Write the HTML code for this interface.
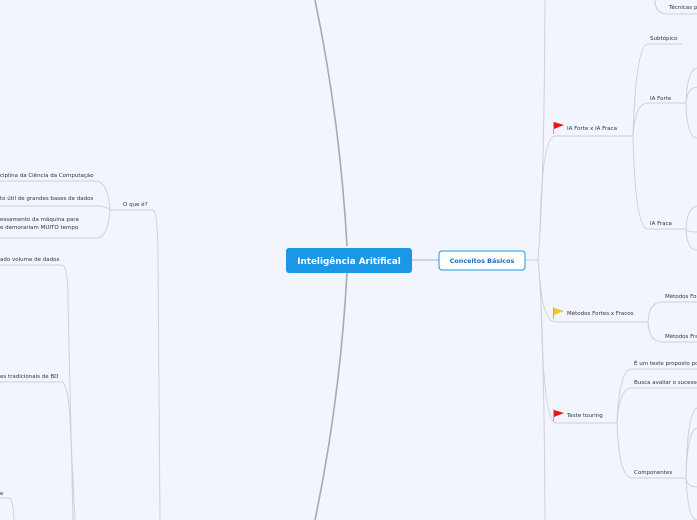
<!DOCTYPE html>
<html><head><meta charset="utf-8"><style>
html,body{margin:0;padding:0;background:#f2f5fd;width:697px;height:520px;overflow:hidden}
svg{display:block}
text{font-family:"DejaVu Sans","Liberation Sans",sans-serif;font-size:5.5px;fill:#333}
</style></head><body>
<svg width="697" height="520" viewBox="0 0 697 520" xmlns="http://www.w3.org/2000/svg">
<g fill="none" stroke="#a9a9a9" stroke-width="1.6">
<path d="M315,0 Q340,120 347,246"/>
<path d="M347,273 Q340,400 315,520"/>
</g>
<g fill="none" stroke="#cfd0d4" stroke-width="1">
<path d="M411,260 L439,260" stroke="#b5b5b5"/>
<path d="M525,260 L538,260"/>
<path d="M545,0 Q544,200 538,258 Q544,320 545,520"/>
<path d="M655,0 Q655,14 668,14 L697,14"/>
<path d="M540,230 Q542,136 555,136 L633,136"/>
<path d="M633,136 Q636,44 648,44 L682,44"/>
<path d="M633,136 Q635,103 648,103 L686,103"/>
<path d="M633,136 Q635,229 648,229 L686,229"/>
<path d="M686,103 Q687,70 697,68"/>
<path d="M686,103 Q687,88 697,87"/>
<path d="M686,103 Q687,138 697,138"/>
<path d="M686,229 Q687,208 697,206"/>
<path d="M686,229 Q687,232 697,232"/>
<path d="M686,229 Q687,250 697,250"/>
<path d="M540,280 Q543,322 556,322 L648,322"/>
<path d="M648,322 Q649,302 662,302 L697,302"/>
<path d="M648,322 Q649,342 662,342 L697,342"/>
<path d="M541,300 Q543,423 556,423 L617,423"/>
<path d="M617,423 Q619,369 632,369 L697,369"/>
<path d="M617,423 Q619,388 632,388 L697,388"/>
<path d="M617,423 Q619,478 632,478 L686,478"/>
<path d="M686,478 Q687,412 697,408"/>
<path d="M686,478 Q687,431 697,428"/>
<path d="M686,478 Q687,487 697,487"/>
<path d="M686,478 Q688,520 697,520"/>
<path d="M110,210 L153,210 Q158,212 158,260 L160,520"/>
<path d="M0,181 L97,181 Q108,183 110,210"/>
<path d="M0,206 L100,206 Q108,207 110,210"/>
<path d="M0,238 L98,238 Q108,236 110,210"/>
<path d="M0,265 L62,265 Q68,266 68,300 L73,520"/>
<path d="M0,382 L62,382 Q68,384 70,420 L75,520"/>
<path d="M0,498 L10,498 Q13,500 14,520"/>
</g>
<rect x="286" y="248" width="126" height="25" rx="3" fill="#1b97e6"/>
<text x="349" y="264" text-anchor="middle" style="font-size:8.8px;font-weight:bold;fill:#fff">Inteligência Aritifical</text>
<rect x="439" y="251" width="86" height="19" rx="3" fill="#fff" stroke="#1b97e6" stroke-width="1"/>
<text x="482" y="263" text-anchor="middle" style="font-size:6.4px;font-weight:bold;fill:#1a6fc2">Conceitos Básicos</text>
<g>
<line x1="553.5" y1="122" x2="553.5" y2="134" stroke="#c9a58a" stroke-width="1"/>
<path d="M554,122 L564,125 L554,129 Z" fill="#e81818"/>
<line x1="553.5" y1="307" x2="553.5" y2="319" stroke="#c9a58a" stroke-width="1"/>
<path d="M554,308 L564,311 L554,315 Z" fill="#f5c518"/>
<line x1="553.5" y1="409" x2="553.5" y2="421" stroke="#c9a58a" stroke-width="1"/>
<path d="M554,410 L564,413 L554,417 Z" fill="#e81818"/>
</g>
<text x="669" y="9">Técnicas p</text>
<text x="567" y="130">IA Forte x IA Fraca</text>
<text x="650" y="40">Subtópico</text>
<text x="650" y="100">IA Forte</text>
<text x="650" y="225">IA Fraca</text>
<text x="567" y="315">Métodos Fortes x Fracos</text>
<text x="665" y="298">Métodos For</text>
<text x="665" y="338">Métodos Fra</text>
<text x="567" y="417">Teste touring</text>
<text x="634" y="365">É um teste proposto po</text>
<text x="634" y="384">Busca avaliar o sucesso</text>
<text x="634" y="474">Componentes</text>
<text x="123" y="206">O que é?</text>
<text x="0" y="177">ciplina da Ciência da Computação</text>
<text x="0" y="200">to útil de grandes bases de dados</text>
<text x="0" y="221">essamento da máquina para</text>
<text x="0" y="229">e demorariam MUITO tempo</text>
<text x="0" y="261">ado volume de dados</text>
<text x="0" y="378">es tradicionais de BD</text>
<text x="0" y="495">e</text>
</svg>
</body></html>
